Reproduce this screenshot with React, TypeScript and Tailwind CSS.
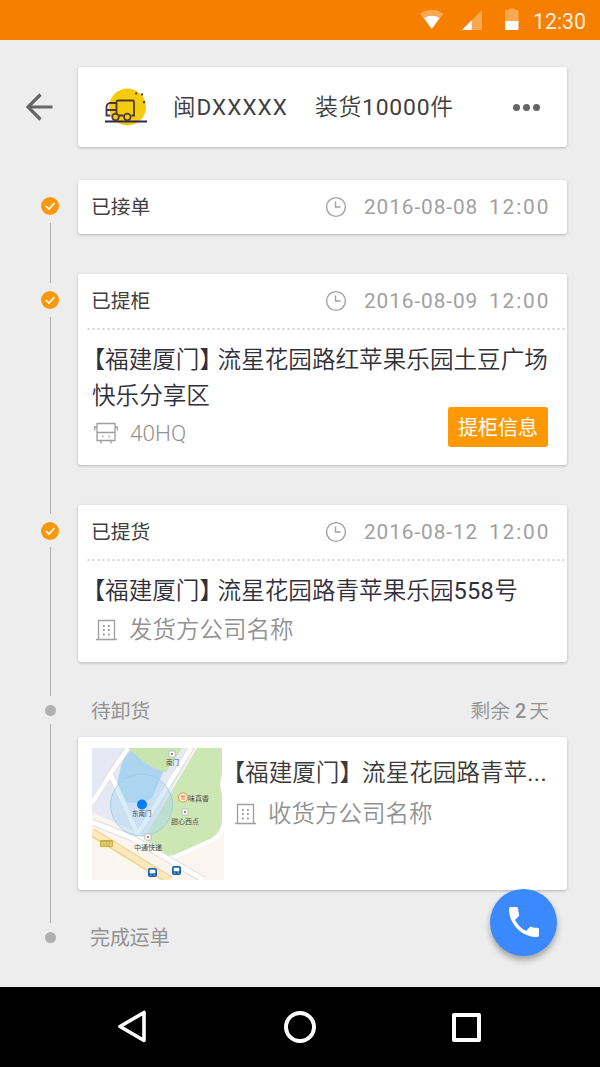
import type { ReactNode } from "react";

const cardBase =
  "w-[489px] rounded-[3px] bg-white shadow-[0_1px_3px_rgba(0,0,0,0.24)]";

function StatusBar() {
  return (
    <div className="flex h-10 items-center justify-end bg-[#f77f00] pr-[14px]">
      <svg width="99" height="24" viewBox="0 0 99 24" fill="#fff" className="mr-[14px]">
        <path d="M0 5.800Q11.700-2.200 23.500 5.800L11.700 21z" opacity=".32" />
        <path d="M4 10Q11.700 5.500 19.500 10L11.700 21z" />
        <path d="M62 2v20H42z" opacity=".32" />
        <path d="M51.700 12.300V22H42z" />
        <path d="M85 3q0-1 1-1h3V.500h6V2h2.500q1 0 1 1v10H85z" opacity=".32" />
        <path d="M85 13h13.500v8q0 1-1 1H86q-1 0-1-1z" />
      </svg>
      <span className="mt-[3px] font-['Roboto',sans-serif] text-[21.300px] leading-10 text-[#fff0dc]">12:30</span>
    </div>
  );
}

function TruckIcon() {
  return (
    <svg width="42" height="39" viewBox="0 0 42 39" fill="none" stroke="#503a22" strokeWidth="1.800">
      <circle cx="22.500" cy="19" r="18.500" fill="#f5cb0d" stroke="none" />
      <path d="M0 33.500h42" stroke="#28265a" />
      <path d="M11.500 27V14q0-1.500 1.500-1.500h14.500q1.500 0 1.500 1.500v13.500h-2.500M14 27.500h4.500" />
      <path d="M11.500 15H4.500Q1.500 16 1.500 19v8.500h4M2 22h9.500" stroke="#4b3346" />
      <circle cx="10.500" cy="29" r="3.300" />
      <circle cx="22.300" cy="29" r="3.300" />
      <path d="M30.200 5.500h2M36 6.500h2M38 14.200h2" strokeWidth="2.200" />
    </svg>
  );
}

function ClockIcon() {
  return (
    <svg width="22" height="22" viewBox="0 0 22 22" fill="none" stroke="#a2a2a2" strokeWidth="1.400">
      <circle cx="11" cy="11" r="9.400" />
      <path d="M10.500 5.500V11H15.500" />
    </svg>
  );
}

function BusIcon() {
  return (
    <svg width="24" height="22" viewBox="0 0 24 22" fill="none" stroke="#9f9f9f" strokeWidth="1.300">
      <path d="M3 1.500h18v17H3zM3 10.500h18M3 5H.700v3.500M21 5h2.300v3.500M7 19v2.500M17 19v2.500" />
      <path d="M8 14.500h1.500M14.500 14.500H16" strokeWidth="1.500" />
    </svg>
  );
}

function BuildingIcon() {
  return (
    <svg width="21" height="22" viewBox="0 0 21 22" fill="none" stroke="#9f9f9f" strokeWidth="1.300">
      <path d="M2.500 20.500V1.500h16v19M0 20.500h21" />
      <path d="M7 7h1.800M12 7h1.800M7 11h1.800M12 11h1.800M7 15.500h1.800M12 15.500h1.800" strokeWidth="1.800" />
    </svg>
  );
}

function Check() {
  return (
    <svg width="18" height="18" viewBox="0 0 18 18" className="shrink-0">
      <circle cx="9" cy="9" r="9" fill="#f9980b" />
      <path d="m4.800 9 3.200 3 5.600-6" fill="none" stroke="#fff" strokeWidth="1.700" />
    </svg>
  );
}

function Line({ className }: { className: string }) {
  return <div className={`w-px shrink-0 bg-[#b0b0b0] ${className}`} />;
}

function Rail() {
  return (
    <div className="flex w-[22px] flex-col items-center pt-[17px]">
      <Check />
      <Line className="mt-2 h-[60px]" />
      <div className="mt-2 flex"><Check /></div>
      <Line className="mt-2 h-[197px]" />
      <div className="mt-2 flex"><Check /></div>
      <Line className="mt-[7px] h-[149px]" />
      <div className="mt-[9px] size-[11px] shrink-0 rounded-full bg-[#b0b0b0]" />
      <Line className="mt-2 h-[199px]" />
      <div className="mt-[9px] size-[11px] shrink-0 rounded-full bg-[#b0b0b0]" />
    </div>
  );
}

function StepHead({ title, date }: { title: string; date: string }) {
  return (
    <div className="flex h-[54px] items-center pl-[13px] pr-4">
      <span className="pt-[2px] text-[19.800px] leading-[54px] text-[#404040]">{title}</span>
      <div className="ml-auto flex items-center font-['Roboto',sans-serif] text-[20.800px] text-[#a0a0a0]">
        <ClockIcon />
        <span className="ml-[17px] w-[125px] pt-[2px] tracking-[0.920px]">{date}</span>
        <span className="w-[62px] pt-[2px] tracking-[1.900px]">12:00</span>
      </div>
    </div>
  );
}

function Dots() {
  return (
    <div className="ml-2 mr-[2px] h-[2px] bg-[radial-gradient(circle_at_center,#d6d6d6_0.9px,transparent_1.400px)] bg-[length:5px_2px]" />
  );
}

function Party({ icon, children }: { icon: ReactNode; children: ReactNode }) {
  return (
    <div className="flex items-center text-[23.500px] font-[350] leading-9 text-[#929292]">
      {icon}
      {children}
    </div>
  );
}

function MapThumb() {
  return (
    <svg width="132" height="132" viewBox="0 0 132 132" className="shrink-0" fontFamily="Noto Sans CJK SC, sans-serif">
      <rect width="132" height="132" fill="#faf6ef" />
      <path d="M0 0H103L53 88 0 64z" fill="#e6e9f3" />
      <path d="M35 0H88L66 31 40 20z" fill="#c8e5b0" />
      <path d="M34 0 55 14 72 22 60 50 50 55 28 54 25 36 29 18z" fill="#acd4ef" />
      <path d="M38 0H90L74 24Q54 20 38 0z" fill="#c8e5b0" />
      <path d="M105 0h27v72l-1 10q-3 9-14 13l-34 13q-10 3-17-7L52 90z" fill="#cce6b4" />
      <path d="M36 0 19 25 0 55M18 25l28 62M99 0 47 84" fill="none" stroke="#dddcdc" strokeWidth="6" />
      <path d="M36 0 19 25 0 55M18 25l28 62M99 0 47 84" fill="none" stroke="#fff" strokeWidth="4.500" />
      <path d="M132 0v25l-2 12 2 10v24q0 16-14 22l-31 14q-9 5-17 1L45 88" fill="none" stroke="#fff" strokeWidth="4" />
      <path d="M0 74 40 90 112 132" fill="none" stroke="#e2ded8" strokeWidth="7" />
      <path d="M0 74 40 90 112 132" fill="none" stroke="#fff" strokeWidth="5" />
      <path d="M0 84 78 132" stroke="#efd38d" strokeWidth="8" />
      <path d="M0 84 78 132" stroke="#fbe8bc" strokeWidth="6" />
      <path d="M0 89 70 132" stroke="#e9cc88" strokeWidth=".7" />
      <circle cx="49.500" cy="57" r="31" fill="#aad8f5" fillOpacity=".45" stroke="#9bc9e5" strokeWidth=".8" />
      <circle cx="50" cy="56.500" r="5" fill="#087ff0" />
      <g fill="#fff" stroke="#aaa" strokeWidth=".7">
        <rect x="77" y="3" width="6" height="6" rx="1" />
        <rect x="90" y="61" width="6" height="6" rx="1" />
        <rect x="53" y="86" width="6" height="6" rx="1" />
      </g>
      <g fill="#666">
        <circle cx="80" cy="6" r="1" />
        <circle cx="93" cy="64" r="1" />
        <circle cx="56" cy="89" r="1" />
      </g>
      <circle cx="91" cy="49.500" r="4.500" fill="#fff" stroke="#e49235" strokeWidth="1.200" />
      <path d="M88.500 48h5M90 48v4M92 48v4" stroke="#e4771f" fill="none" />
      <rect x="8" y="92" width="13" height="7" rx="1" fill="#c9ae40" />
      <text x="9" y="97.500" fontSize="5" fill="#fff3b0">X502</text>
      <g fill="#1763ae">
        <rect x="56" y="120" width="9" height="9" rx="2" />
        <rect x="80" y="118" width="9" height="9" rx="2" />
      </g>
      <path d="M58 122h5v3h-5zM82 120h5v3h-5zM58 127h1.500M61.500 127H63M82 125h1.500M85.500 125H87" fill="#fff" stroke="#fff" strokeWidth=".6" />
      <g fill="#4d4d4d" fontSize="6.500">
        <text x="74" y="17">南门</text>
        <text x="96" y="52.500" fontSize="7">味真香</text>
        <text x="40" y="68">东南门</text>
        <text x="79" y="76" fontSize="7">甜心西点</text>
        <text x="42" y="101.500" fontSize="7">中通快递</text>
      </g>
    </svg>
  );
}

function Header() {
  return (
    <div className="flex items-center pl-[26px]">
      <svg width="28" height="28" viewBox="0 0 28 28" fill="none" stroke="#666" strokeWidth="3.200" className="mr-6">
        <path d="M14.500 1.500 2 14l12.500 12.500M2 14h24.500" />
      </svg>
      <div className={`flex h-20 items-center pl-[27px] ${cardBase}`}>
        <TruckIcon />
        <span className="ml-[26px] w-[142px] whitespace-nowrap pt-px text-[22.500px] font-[350] tracking-[1px] text-[#404040]">
          闽<span className="font-normal tracking-[1.050px]">DXXXXX</span>
        </span>
        <span className="whitespace-nowrap pt-[3px] text-[22.900px] font-[350] tracking-[0.600px] text-[#404040]">
          装货<span className="font-normal tracking-[0.800px]">10000</span>件
        </span>
        <div className="ml-auto mr-[27px] flex gap-[3px]">
          <i className="size-[7px] rounded-full bg-[#666]" />
          <i className="size-[7px] rounded-full bg-[#666]" />
          <i className="size-[7px] rounded-full bg-[#666]" />
        </div>
      </div>
    </div>
  );
}

export default function App() {
  return (
    <div className="flex h-[1067px] w-[600px] flex-col overflow-hidden bg-[#ededed] font-['Roboto','Noto_Sans_CJK_SC',sans-serif]">
      <StatusBar />
      <main className="relative h-[947px] pt-[27px]">
        <Header />
        <div className="mt-[33px] flex pl-[39px]">
          <Rail />
          <div className="ml-[17px] flex flex-col">
            <section className={`h-[54px] ${cardBase}`}>
              <StepHead title="已接单" date="2016-08-08" />
            </section>

            <section className={`mt-[39.500px] h-[191.500px] ${cardBase}`}>
              <StepHead title="已提柜" date="2016-08-09" />
              <Dots />
              <p className="whitespace-nowrap pl-[14px] pt-3 text-[23.600px] font-[350] leading-[36.500px] text-[#30303a]">
                <span className="-ml-[10.500px] mr-[-5.500px]">【福建厦门】</span>流星花园路红苹果乐园土豆广场
                <br />
                快乐分享区
              </p>
              <div className="flex pl-4">
                <Party icon={<BusIcon />}>
                  <span className="ml-[12px] text-[22.500px]">40HQ</span>
                </Party>
                <button className="-mt-2 ml-auto mr-[19px] h-10 w-[100px] rounded-[3px] bg-[#fe9804] pt-[2px] text-[20px] leading-[38px] text-white">
                  提柜信息
                </button>
              </div>
            </section>

            <section className={`mt-10 h-[157px] ${cardBase}`}>
              <StepHead title="已提货" date="2016-08-12" />
              <Dots />
              <p className="whitespace-nowrap pl-[14px] pt-3 text-[23.600px] font-[350] leading-[37px] text-[#30303a]">
                <span className="-ml-[10.500px] mr-[-5.500px]">【福建厦门】</span>流星花园路青苹果乐园
                <span className="font-normal tracking-[0.300px]">558</span>号
              </p>
              <div className="pl-[18px] pt-[2px]">
                <Party icon={<BuildingIcon />}>
                  <span className="ml-3">发货方公司名称</span>
                </Party>
              </div>
            </section>

            <div className="mt-[33px] flex h-8 items-center justify-between pl-[13px] pr-[18px] pt-px text-[19.800px] text-[#929292]">
              <span>待卸货</span>
              <span className="font-[350]">
                剩余 <b className="font-medium">2</b><span className="ml-[3px]">天</span>
              </span>
            </div>

            <section className={`mt-[10px] flex h-[153px] pl-[13.500px] pt-[11px] ${cardBase}`}>
              <MapThumb />
              <div className="min-w-0 flex-1 pl-[10.500px] pr-4 pt-[7px]">
                <p className="whitespace-nowrap text-[23.600px] font-[350] leading-[37px] text-[#3a3a3a]">
                  <span className="-ml-[12.500px] mr-[-1px]">【福建厦门】</span>流星花园路青苹
                  <span className="font-normal tracking-[0.400px]">...</span>
                </p>
                <div className="pl-px pt-[4px]">
                  <Party icon={<BuildingIcon />}>
                    <span className="ml-3">收货方公司名称</span>
                  </Party>
                </div>
              </div>
            </section>

            <div className="mt-[33px] pl-3 text-[19.900px] leading-8 text-[#929292]">完成运单</div>
          </div>
        </div>
        <button className="absolute left-[490px] top-[849px] flex size-[67px] items-center justify-center rounded-full bg-[#3b89fc] shadow-[0_4px_6px_rgba(0,0,0,0.32)]">
          <svg width="40" height="40" viewBox="0 0 24 24" fill="#fff" className="-mt-[2px]">
            <path d="M6.620 10.790a15.050 15.050 0 0 0 6.590 6.590l2.200-2.200c.270-.270.670-.360 1.020-.240 1.120.370 2.330.570 3.570.570.550 0 1 .450 1 1V20c0 .550-.450 1-1 1C10.610 21 3 13.390 3 4c0-.550.450-1 1-1h3.500c.550 0 1 .450 1 1 0 1.250.200 2.450.570 3.570.110.350.030.740-.250 1.020z" />
          </svg>
        </button>
      </main>
      <nav className="flex h-20 items-center bg-black pl-[117px]">
        <svg width="30" height="36" viewBox="0 0 30 36" fill="none" stroke="#fff" strokeWidth="3.600" strokeLinejoin="round">
          <path d="M27 3.500v28L3 17.500z" />
        </svg>
        <div className="ml-[137px] size-8 rounded-full border-4 border-white" />
        <div className="ml-[136px] size-[29px] rounded-[2px] border-4 border-white" />
      </nav>
    </div>
  );
}
